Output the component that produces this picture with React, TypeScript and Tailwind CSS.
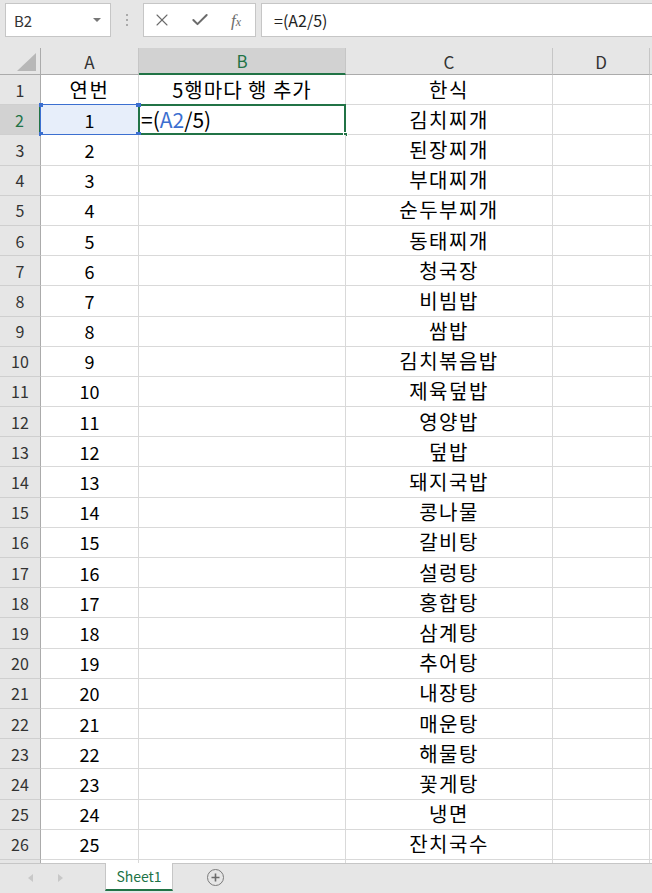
import { Check, X } from "lucide-react";

const foods = [
  "한식",
  "김치찌개",
  "된장찌개",
  "부대찌개",
  "순두부찌개",
  "동태찌개",
  "청국장",
  "비빔밥",
  "쌈밥",
  "김치볶음밥",
  "제육덮밥",
  "영양밥",
  "덮밥",
  "돼지국밥",
  "콩나물",
  "갈비탕",
  "설렁탕",
  "홍합탕",
  "삼계탕",
  "추어탕",
  "내장탕",
  "매운탕",
  "해물탕",
  "꽃게탕",
  "냉면",
  "잔치국수",
];

const cols = "grid grid-cols-[41px_98px_207px_207px_97px_1fr]";
const ko = "text-[20px] tracking-[1.5px]";

const FormulaBar = () => (
  <div className="h-[48px] bg-[#e6e6e6] flex items-start pt-[3px]">
    <div className="ml-[5px] w-[106px] h-[34px] bg-white border border-[#c6c6c6] flex items-center justify-between pl-[8px] pr-[9px]">
      <span className="text-[15px] text-[#333]">B2</span>
      <span className="w-0 h-0 border-l-[4px] border-r-[4px] border-t-[4px] border-l-transparent border-r-transparent border-t-[#777]" />
    </div>
    <div className="w-[32px] h-[34px] flex flex-col items-center justify-center gap-[3px]">
      <span className="w-[2px] h-[2px] bg-[#aaa]" />
      <span className="w-[2px] h-[2px] bg-[#aaa]" />
      <span className="w-[2px] h-[2px] bg-[#aaa]" />
    </div>
    <div className="w-[113px] h-[34px] bg-white border border-[#c6c6c6] flex items-center text-[#6b6b6b]">
      <X className="ml-[8px] w-[20px] h-[20px]" strokeWidth={1.3} />
      <Check className="ml-[18px] w-[20px] h-[20px]" strokeWidth={2.4} />
      <span className="ml-[21px] font-['Liberation_Serif',serif] italic text-[17px] leading-none">
        f<span className="text-[12px]">x</span>
      </span>
    </div>
    <div className="ml-[5px] flex-1 h-[34px] bg-white border border-[#c6c6c6] border-r-0 flex items-center pl-[12px] text-[16px] text-[#222]">
      =(A2/5)
    </div>
  </div>
);

const HeaderRow = () => (
  <div className={`${cols} h-[27px] bg-[#e6e6e6] text-[17px] text-[#333]`}>
    <div className="relative border-r border-b border-[#ababab]">
      <svg className="absolute right-[4px] bottom-[3px]" width="19" height="18" viewBox="0 0 19 18">
        <polygon points="19,0 19,18 0,18" fill="#b7b7b7" />
      </svg>
    </div>
    <div className="flex items-center justify-center border-r border-b border-r-[#c6c6c6] border-b-[#ababab]">A</div>
    <div className="flex items-center justify-center bg-[#d2d2d2] border-r border-r-[#c6c6c6] border-b-2 border-b-[#217346] text-[#217346]">
      B
    </div>
    <div className="flex items-center justify-center border-r border-b border-r-[#c6c6c6] border-b-[#ababab]">C</div>
    <div className="flex items-center justify-center border-r border-b border-r-[#c6c6c6] border-b-[#ababab]">D</div>
    <div className="border-b border-[#ababab]" />
  </div>
);

const Row = ({ n, a, b, c }: { n: number; a?: string; b?: React.ReactNode; c?: string }) => {
  const selected = n === 2;
  return (
    <div className={`${cols} h-[30.2px] text-[18px] text-black`}>
      <div
        className={`flex items-center justify-center text-[16px] border-b border-b-[#cfcfcf] ${
          selected
            ? "bg-[#d2d2d2] text-[#217346] border-r-2 border-r-[#217346]"
            : "bg-[#e6e6e6] text-[#333] border-r border-r-[#ababab]"
        }`}
      >
        {n}
      </div>
      <div
        className={`relative flex items-center justify-center border-r border-b border-[#d9d9d9] ${
          selected ? "bg-[#e7eefa]" : "bg-white"
        } ${n === 1 ? ko : ""}`}
      >
        {a}
        {selected && (
          <>
            <span className="absolute -left-[1px] -top-[1px] -right-[1px] -bottom-[1px] border-[1.5px] border-[#3b6fd0]" />
            <span className="absolute -left-[2px] -top-[2px] w-[4px] h-[4px] bg-[#3b6fd0]" />
            <span className="absolute -right-[2px] -top-[2px] w-[4px] h-[4px] bg-[#3b6fd0]" />
            <span className="absolute -left-[2px] -bottom-[2px] w-[4px] h-[4px] bg-[#3b6fd0]" />
            <span className="absolute -right-[2px] -bottom-[2px] w-[4px] h-[4px] bg-[#3b6fd0]" />
          </>
        )}
      </div>
      <div
        className={`relative flex items-center border-r border-b border-[#d9d9d9] bg-white ${
          selected ? "justify-start pl-[2px] text-[21px]" : "justify-center"
        } ${n === 1 ? "text-[20px] tracking-[1px]" : ""}`}
      >
        {b}
        {selected && (
          <>
            <span className="absolute -left-[1px] -top-[1px] -right-[1px] -bottom-[1px] border-2 border-[#217346]" />
            <span className="absolute -right-[3px] -bottom-[3px] w-[5px] h-[5px] bg-[#217346] border border-white" />
            <span className="absolute -left-[2px] -top-[2px] w-[4px] h-[4px] bg-[#3b6fd0]" />
            <span className="absolute -left-[2px] -bottom-[2px] w-[4px] h-[4px] bg-[#3b6fd0]" />
          </>
        )}
      </div>
      <div className={`flex items-center justify-center border-r border-b border-[#d9d9d9] bg-white ${ko}`}>{c}</div>
      <div className="border-r border-b border-[#d9d9d9] bg-white" />
      <div className="border-b border-[#d9d9d9] bg-white" />
    </div>
  );
};

const TabBar = () => (
  <div className="h-[30px] bg-[#e6e6e6] border-t border-[#c6c6c6] flex items-start">
    <div className="w-[105px] h-[27px] flex items-center">
      <svg className="ml-[28px]" width="5" height="8" viewBox="0 0 5 8">
        <polygon points="5,0 5,8 0,4" fill="#c8c8c8" />
      </svg>
      <svg className="ml-[25px]" width="5" height="8" viewBox="0 0 5 8">
        <polygon points="0,0 0,8 5,4" fill="#c8c8c8" />
      </svg>
    </div>
    <div className="-mt-[1px] w-[68px] h-[28px] bg-white border-x border-[#c6c6c6] border-b-2 border-b-[#217346] flex items-center justify-center text-[14px] text-[#217346]">
      Sheet1
    </div>
    <div className="ml-[34px] mt-[5px] w-[17px] h-[17px] rounded-full border-[1.5px] border-[#7a7a7a] flex items-center justify-center">
      <svg width="9" height="9" viewBox="0 0 9 9">
        <path d="M4.5 0.5V8.5M0.5 4.5H8.5" stroke="#6b6b6b" strokeWidth="1.6" />
      </svg>
    </div>
  </div>
);

export default function App() {
  return (
    <div className="w-[652px] h-[893px] overflow-hidden bg-white font-['Noto_Sans_CJK_KR','Noto_Sans',sans-serif] leading-none">
      <FormulaBar />
      <div className="h-[815px] overflow-hidden">
        <HeaderRow />
        {foods.map((food, i) => (
          <Row
            key={i}
            n={i + 1}
            a={i === 0 ? "연번" : String(i)}
            b={
              i === 0 ? (
                "5행마다 행 추가"
              ) : i === 1 ? (
                <span>
                  =(<span className="text-[#3b6fd0]">A2</span>/5)
                </span>
              ) : undefined
            }
            c={food}
          />
        ))}
        <Row n={27} />
      </div>
      <TabBar />
    </div>
  );
}
